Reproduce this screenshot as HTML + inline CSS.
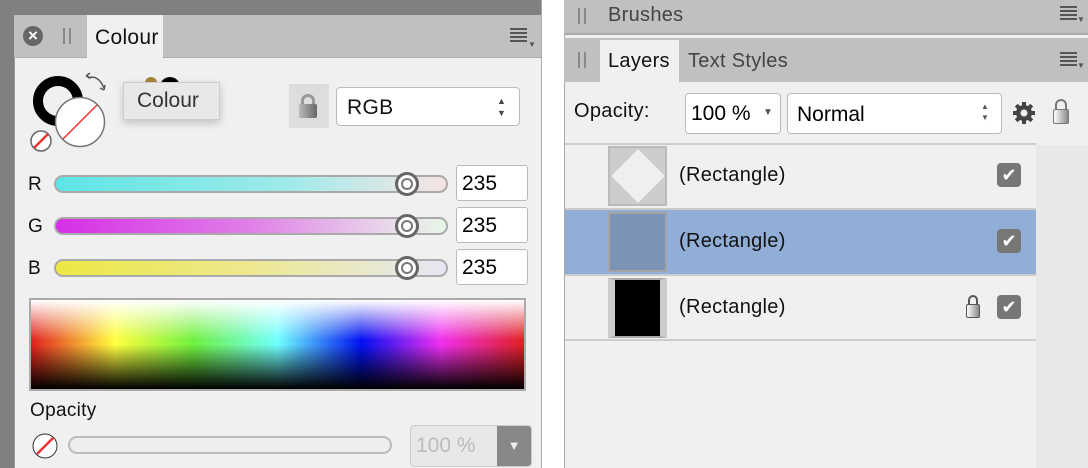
<!DOCTYPE html><html><head><style>
*{margin:0;padding:0;box-sizing:border-box}
body{width:1088px;height:468px;overflow:hidden;background:#fff;font-family:"Liberation Sans",sans-serif;position:relative}
.a{position:absolute}
.t{font-size:20px;color:#111;letter-spacing:0.3px}
.hb{position:absolute;width:17px;height:14px;border-top:2px solid #555;border-bottom:2px solid #555}
.hb:before,.hb:after{content:"";position:absolute;left:0;width:17px;height:2px;background:#555}
.hb:before{top:2px}.hb:after{top:6px}
</style></head><body>
<div class="a" style="left:0;top:0;width:542px;height:468px;background:#808080"></div>
<div class="a" style="left:14px;top:15px;width:527px;height:453px;background:#f0f0f0;border-left:1px solid #9a9a9a"></div>
<div class="a" style="left:14px;top:15px;width:527px;height:43px;background:#c0c0c0;border-bottom:1px solid #aaa"></div>
<div class="a" style="left:87px;top:15px;width:76px;height:44px;background:#f0f0f0"></div>
<div class="a" style="left:23px;top:26px;width:20px;height:20px;border-radius:50%;background:#666;color:#fff;font-size:17px;text-align:center;line-height:20px;font-weight:bold">×</div>
<div class="a" style="left:63px;top:28px;width:2px;height:16px;background:#888"></div><div class="a" style="left:69px;top:28px;width:2px;height:16px;background:#888"></div>
<div class="a t" style="left:95px;top:26px;font-size:21px">Colour</div>
<div class="hb" style="left:510px;top:28px"></div>
<div class="a" style="left:528px;top:40px;font-size:8px;color:#555">▼</div>
<div class="a" style="left:33px;top:76px;width:50px;height:50px;border-radius:50%;border:10px solid #000"></div>
<svg class="a" style="left:54px;top:96px" width="52" height="52"><circle cx="26" cy="26" r="24.5" fill="#fff" stroke="#777" stroke-width="1.5"/><line x1="9" y1="43" x2="43" y2="9" stroke="#e33" stroke-width="1.5"/></svg>
<svg class="a" style="left:29px;top:129px" width="24" height="24"><circle cx="12" cy="12" r="10" fill="#fff" stroke="#666" stroke-width="1.5"/><line x1="5" y1="19" x2="19" y2="5" stroke="#e33" stroke-width="2.5"/></svg>
<svg class="a" style="left:84px;top:70px" width="24" height="26"><path d="M4 8 Q14 4 20 18 M2 6 l4-3 M2 6 l5 2 M20 20 l-4-2 M20 20 l1-5" fill="none" stroke="#555" stroke-width="1.5"/></svg>
<div class="a" style="left:145px;top:77px;width:12px;height:12px;border-radius:50%;background:#a8843a"></div>
<div class="a" style="left:160px;top:77px;width:20px;height:12px;border-radius:10px 10px 0 0;background:#000"></div>
<div class="a" style="left:123px;top:82px;width:97px;height:38px;background:#e8e8e8;border:1px solid #ccc;box-shadow:0 3px 8px rgba(0,0,0,.2);font-size:21px;color:#333;padding:6px 0 0 13px">Colour</div>
<div class="a" style="left:289px;top:84px;width:40px;height:44px;background:#ddd"></div>
<div class="a" style="left:301px;top:94px;width:14px;height:12px;border:3px solid #999;border-bottom:none;border-radius:7px 7px 0 0"></div>
<div class="a" style="left:299px;top:104px;width:18px;height:14px;background:linear-gradient(90deg,#bbb,#666);border-radius:2px"></div>
<div class="a" style="left:336px;top:87px;width:184px;height:39px;background:#fff;border:1px solid #bbb;border-radius:4px"></div>
<div class="a t" style="left:347px;top:96px;font-size:21px">RGB</div>
<div class="a" style="left:497px;top:95px;font-size:9px;color:#444;line-height:12px">▲<br>▼</div>
<div class="a t" style="left:28px;top:174px;font-size:19px">R</div>
<div class="a t" style="left:28px;top:216px;font-size:19px">G</div>
<div class="a t" style="left:28px;top:258px;font-size:19px">B</div>
<div class="a" style="left:54px;top:175px;width:394px;height:18px;border-radius:9px;border:2px solid #aaa;background:linear-gradient(90deg,#5ee5e5,#a0eaea 60%,#d8e8e8 85%,#f6e3e3)"></div>
<div class="a" style="left:54px;top:217px;width:394px;height:18px;border-radius:9px;border:2px solid #aaa;background:linear-gradient(90deg,#d52fe6,#e080e8 50%,#e8d8ea 85%,#e8f6e8)"></div>
<div class="a" style="left:54px;top:259px;width:394px;height:18px;border-radius:9px;border:2px solid #aaa;background:linear-gradient(90deg,#ebe843,#ede890 50%,#e8e8d8 85%,#e6e6f6)"></div>
<div class="a" style="left:395px;top:172px;width:24px;height:24px;border-radius:50%;border:3px solid #666;background:#fff;box-shadow:inset 0 0 0 3px #fff,inset 0 0 0 5px #777"></div>
<div class="a" style="left:395px;top:214px;width:24px;height:24px;border-radius:50%;border:3px solid #666;background:#fff;box-shadow:inset 0 0 0 3px #fff,inset 0 0 0 5px #777"></div>
<div class="a" style="left:395px;top:256px;width:24px;height:24px;border-radius:50%;border:3px solid #666;background:#fff;box-shadow:inset 0 0 0 3px #fff,inset 0 0 0 5px #777"></div>
<div class="a" style="left:456px;top:165px;width:72px;height:36px;background:#fff;border:1px solid #bbb;border-radius:3px;font-size:21px;padding:6px 0 0 5px">235</div>
<div class="a" style="left:456px;top:207px;width:72px;height:36px;background:#fff;border:1px solid #bbb;border-radius:3px;font-size:21px;padding:6px 0 0 5px">235</div>
<div class="a" style="left:456px;top:249px;width:72px;height:36px;background:#fff;border:1px solid #bbb;border-radius:3px;font-size:21px;padding:6px 0 0 5px">235</div>
<div class="a" style="left:29px;top:298px;width:497px;height:93px;border:2px solid #aaa;background:linear-gradient(180deg,#fff 0%,rgba(255,255,255,0) 45%,rgba(0,0,0,0) 50%,#000 100%),linear-gradient(90deg,#e02020 0%,#ffff40 17%,#70f040 33%,#70ffff 50%,#0010f0 67%,#f030f0 83%,#e02020 100%)"></div>
<div class="a t" style="left:30px;top:400px;font-size:19px">Opacity</div>
<svg class="a" style="left:31px;top:432px" width="28" height="28"><circle cx="14" cy="14" r="12" fill="#fff" stroke="#333" stroke-width="1"/><line x1="6" y1="22" x2="22" y2="6" stroke="#e33" stroke-width="2.5"/></svg>
<div class="a" style="left:68px;top:436px;width:324px;height:18px;border-radius:9px;border:2px solid #bbb;background:#eee"></div>
<div class="a" style="left:410px;top:425px;width:122px;height:42px;border:1px solid #ccc;border-radius:4px;background:#e8e8e8;font-size:21px;color:#bbb;padding:8px 0 0 5px">100 %</div>
<div class="a" style="left:497px;top:426px;width:34px;height:40px;background:#888;color:#eee;font-size:13px;text-align:center;line-height:40px;border-radius:0 3px 3px 0">▼</div>
<div class="a" style="left:541px;top:0;width:1px;height:468px;background:#aaa"></div>
<div class="a" style="left:564px;top:0;width:524px;height:468px;background:#f0f0f0;border-left:1px solid #aaa"></div>
<div class="a" style="left:1036px;top:145px;width:52px;height:323px;background:#e8e8e8"></div>
<div class="a" style="left:564px;top:0;width:524px;height:35px;background:#c0c0c0;border-bottom:2px solid #aaa"></div>
<div class="a" style="left:564px;top:38px;width:524px;height:44px;background:#c0c0c0"></div>
<div class="a" style="left:600px;top:40px;width:79px;height:42px;background:#f0f0f0"></div>
<div class="a" style="left:578px;top:8px;width:2px;height:16px;background:#888"></div><div class="a" style="left:584px;top:8px;width:2px;height:16px;background:#888"></div>
<div class="a" style="left:578px;top:52px;width:2px;height:16px;background:#888"></div><div class="a" style="left:584px;top:52px;width:2px;height:16px;background:#888"></div>
<div class="a" style="left:608px;top:4px;font-size:20px;color:#444;letter-spacing:0.3px">Brushes</div>
<div class="a t" style="left:608px;top:50px">Layers</div>
<div class="a" style="left:688px;top:50px;font-size:20px;color:#444;letter-spacing:0.3px">Text Styles</div>
<div class="hb" style="left:1060px;top:6px"></div>
<div class="hb" style="left:1060px;top:52px"></div>
<div class="a" style="left:1077px;top:15px;font-size:8px;color:#555">▼</div><div class="a" style="left:1077px;top:61px;font-size:8px;color:#555">▼</div>
<div class="a t" style="left:574px;top:100px">Opacity:</div>
<div class="a" style="left:685px;top:93px;width:96px;height:41px;background:#fff;border:1px solid #bbb;border-radius:4px;font-size:21px;padding:8px 0 0 5px">100 %</div>
<div class="a" style="left:763px;top:107px;font-size:10px;color:#555">▼</div>
<div class="a" style="left:787px;top:93px;width:215px;height:41px;background:#fff;border:1px solid #bbb;border-radius:4px;font-size:21px;padding:9px 0 0 9px">Normal</div>
<div class="a" style="left:981px;top:101px;font-size:8px;color:#555;line-height:11px">▲<br>▼</div>
<svg class="a" style="left:1012px;top:101px" width="24" height="24" viewBox="0 0 24 24"><g fill="#444"><circle cx="12" cy="12" r="8"/><rect x="10" y="1" width="4" height="22"/><rect x="1" y="10" width="22" height="4"/><rect x="10" y="1" width="4" height="22" transform="rotate(45 12 12)"/><rect x="10" y="1" width="4" height="22" transform="rotate(-45 12 12)"/></g><circle cx="12" cy="12" r="3.5" fill="#f0f0f0"/></svg>
<div class="a" style="left:1055px;top:99px;width:12px;height:12px;border:2px solid #777;border-bottom:none;border-radius:6px 6px 0 0"></div>
<div class="a" style="left:1053px;top:109px;width:16px;height:15px;border:1px solid #777;background:linear-gradient(90deg,#fff,#888);border-radius:2px"></div>
<div class="a" style="left:565px;top:143px;width:471px;height:2px;background:#ccc"></div>
<div class="a" style="left:565px;top:208px;width:471px;height:2px;background:#ccc"></div>
<div class="a" style="left:565px;top:210px;width:471px;height:64px;background:#91afd6"></div>
<div class="a" style="left:565px;top:274px;width:471px;height:2px;background:#ccc"></div>
<div class="a" style="left:565px;top:339px;width:471px;height:2px;background:#ccc"></div>
<div class="a" style="left:608px;top:146px;width:59px;height:60px;background:#ccc;border:2px solid #bbb;overflow:hidden"><div style="position:absolute;left:9px;top:9px;width:38px;height:38px;background:#efefef;transform:rotate(45deg)"></div></div>
<div class="a" style="left:608px;top:212px;width:59px;height:60px;background:#7b93b4;border:2px solid #a4a4a4"></div>
<div class="a" style="left:608px;top:278px;width:59px;height:60px;background:#000;border:2px solid #aaa;border-left:7px solid #ccc;border-right:7px solid #ccc"></div>
<div class="a t" style="left:679px;top:164px">(Rectangle)</div>
<div class="a t" style="left:679px;top:230px">(Rectangle)</div>
<div class="a t" style="left:679px;top:296px">(Rectangle)</div>
<div class="a" style="left:997px;top:163px;width:24px;height:24px;background:#777;border-radius:4px;color:#fff;font-size:18px;text-align:center;line-height:24px">✔</div>
<div class="a" style="left:997px;top:229px;width:24px;height:24px;background:#777;border-radius:4px;color:#fff;font-size:18px;text-align:center;line-height:24px">✔</div>
<div class="a" style="left:997px;top:295px;width:24px;height:24px;background:#777;border-radius:4px;color:#fff;font-size:18px;text-align:center;line-height:24px">✔</div>
<div class="a" style="left:968px;top:295px;width:10px;height:10px;border:2px solid #555;border-bottom:none;border-radius:5px 5px 0 0"></div>
<div class="a" style="left:966px;top:304px;width:14px;height:14px;border:1px solid #555;background:linear-gradient(90deg,#fff,#888);border-radius:2px"></div>
</body></html>
